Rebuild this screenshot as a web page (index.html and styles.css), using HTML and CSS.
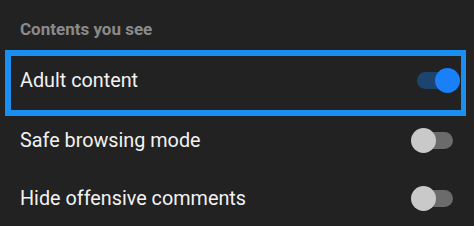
FILE: index.html
```html
<!DOCTYPE html>
<html lang="en">
<head>
  <meta charset="UTF-8">
  <meta name="viewport" content="width=device-width, initial-scale=1.0">
  <title>Contents you see</title>
  <link rel="stylesheet" href="styles.css">
</head>
<body>
  <div class="screen">
    <div class="section-title">Contents you see</div>

    <div class="highlight">
      <div class="setting-row">
        <div class="setting-label">Adult content</div>
        <div class="switch switch-on"><span class="track"></span><span class="knob"></span></div>
      </div>
    </div>

    <div class="settings-list">
      <div class="setting-row">
        <div class="setting-label">Safe browsing mode</div>
        <div class="switch"><span class="track"></span><span class="knob"></span></div>
      </div>
      <div class="setting-row">
        <div class="setting-label">Hide offensive comments</div>
        <div class="switch"><span class="track"></span><span class="knob"></span></div>
      </div>
    </div>
  </div>
</body>
</html>
```

FILE: styles.css
```css
body {
  font-family: Roboto, "Noto Sans", Arial, sans-serif;
  margin: 0;
  padding: 0;
  background-color: #222222;
  color: #f2f2f2;
}
.screen {
  width: 474px;
  height: 226px;
  overflow: hidden;
}
.section-title {
  box-sizing: border-box;
  height: 50px;
  padding: 19px 0 0 20px;
  font-size: 17px;
  font-weight: bold;
  color: #8a8a8a;
}
.highlight {
  margin: 0 8px 0 5px;
  border: 6px solid #1b8ef2;
  border-right-width: 5px;
  padding: 0 1px 6px 9px;
}
.settings-list {
  display: flex;
  flex-direction: column;
  gap: 10px;
  padding: 0 15px 0 20px;
}
.setting-row {
  display: flex;
  align-items: center;
  justify-content: space-between;
  height: 48px;
}
.setting-label {
  font-size: 19.8px;
}
.switch {
  position: relative;
  width: 48px;
  height: 25px;
  flex-shrink: 0;
}
.track {
  position: absolute;
  left: 5px;
  top: 4px;
  width: 37px;
  height: 17px;
  border-radius: 9px;
  background-color: #6b6b6b;
}
.knob {
  position: absolute;
  left: 0;
  top: 0;
  width: 25px;
  height: 25px;
  border-radius: 50%;
  background-color: #c9c9c9;
}
.switch-on .track {
  background-color: #1d446f;
}
.switch-on .knob {
  left: 23px;
  background-color: #1a80f7;
}
```
